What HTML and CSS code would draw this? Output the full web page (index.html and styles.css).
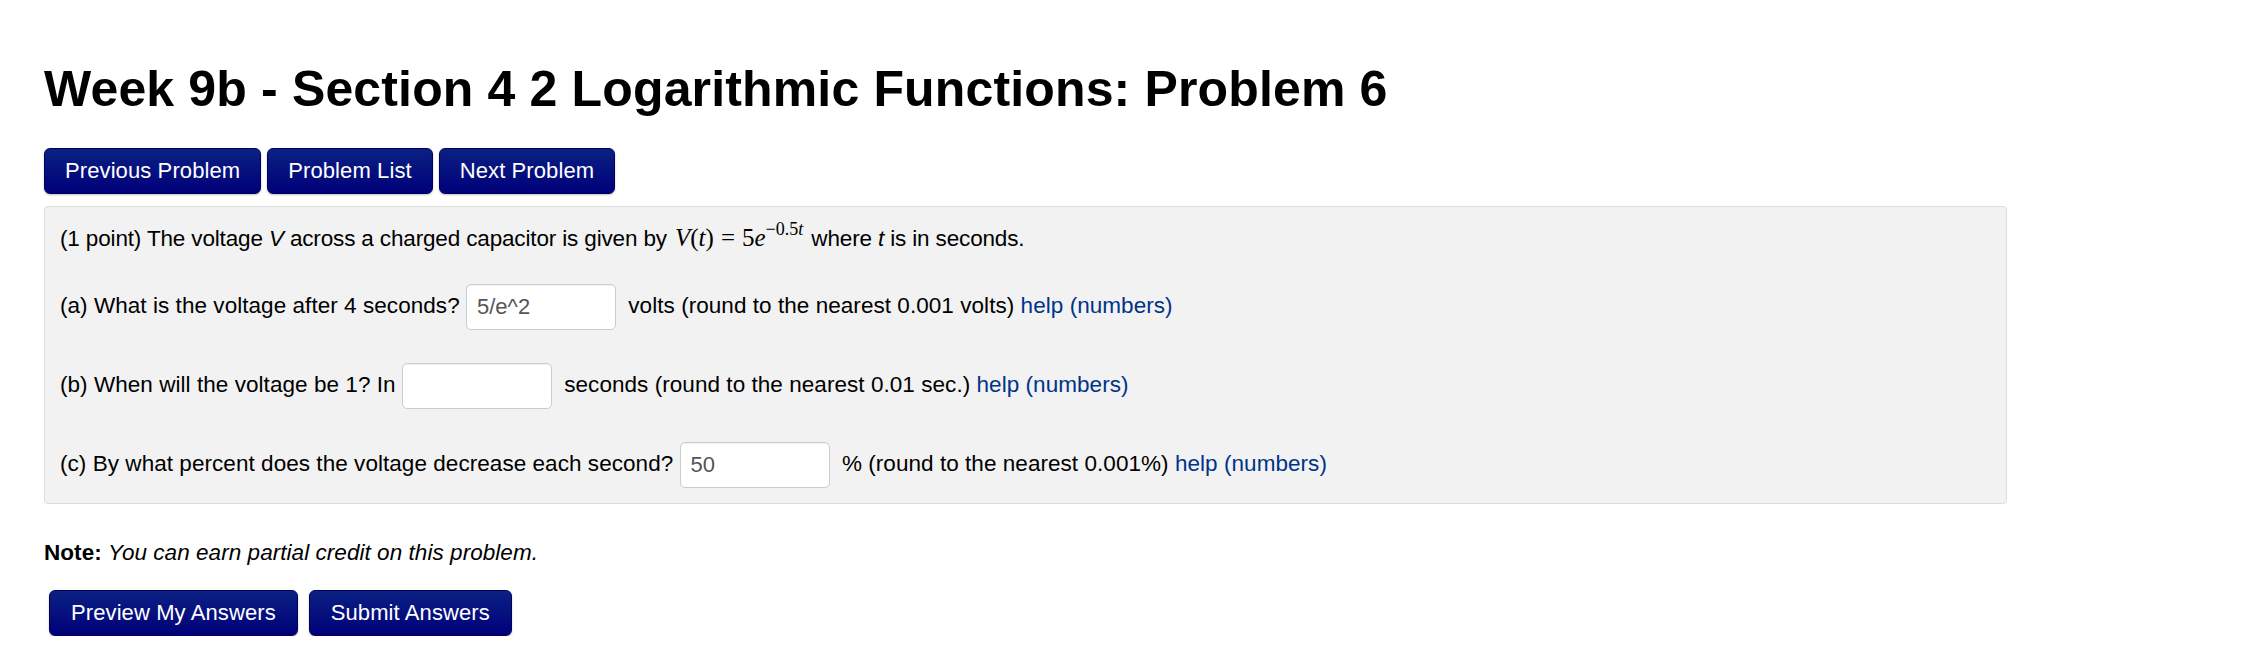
FILE: index.html
```html
<!DOCTYPE html>
<html>
<head>
<title>Week 9b - Section 4 2 Logarithmic Functions: Problem 6</title>
<link rel="stylesheet" href="styles.css">
</head>
<body>
	<div class="page">

		<h1 class="title">Week 9b - Section 4 2 Logarithmic Functions: Problem 6</h1>

		<div class="nav">
			<a class="btn" href="#">Previous Problem</a>
			<a class="btn" href="#">Problem List</a>
			<a class="btn" href="#">Next Problem</a>
		</div>

		<div class="problem">
			<p class="intro">(1 point) The voltage <i>V</i> across a charged capacitor is given by <span class="math"><i>V</i>(<i>t</i>)<span class="eq">=</span>5<i>e</i><sup>&minus;0.5<i>t</i></sup></span> where <i>t</i> is in seconds.</p>

			<p class="part">(a) What is the voltage after 4 seconds? <input class="answer" type="text" value="5/e^2"> volts (round to the nearest 0.001 volts) <a class="help" href="#">help (numbers)</a></p>

			<p class="part">(b) When will the voltage be 1? In <input class="answer" type="text" value=""> seconds (round to the nearest 0.01 sec.) <a class="help" href="#">help (numbers)</a></p>

			<p class="part">(c) By what percent does the voltage decrease each second? <input class="answer" type="text" value="50"> % (round to the nearest 0.001%) <a class="help" href="#">help (numbers)</a></p>
		</div>

		<p class="note"><b>Note:</b> <i>You can earn partial credit on this problem.</i></p>

		<div class="submit">
			<button class="btn" type="button">Preview My Answers</button>
			<button class="btn" type="button">Submit Answers</button>
		</div>

	</div>
</body>
</html>
```

FILE: styles.css
```css
html, body {
  margin: 0;
  padding: 0;
  background: #fff;
}

body {
  font-family: "Liberation Sans", Arial, sans-serif;
  font-size: 22.5px;
  letter-spacing: 0.05px;
  color: #000;
}

.page {
  padding: 62px 0 0 44px;
}

.title {
  margin: 0;
  font-size: 50px;
  line-height: 55px;
  font-weight: bold;
  letter-spacing: 0.15px;
}

.nav {
  display: flex;
  gap: 6px;
  margin-top: 31px;
}

.btn {
  display: inline-block;
  box-sizing: border-box;
  height: 46px;
  padding: 10px 20px;
  border: 1px solid #00005e;
  border-radius: 6px;
  background: linear-gradient(#0b2183, #000079);
  box-shadow: 0 1px 2px rgba(0, 0, 0, 0.25);
  color: #fff;
  font-family: inherit;
  font-size: 22px;
  line-height: 24px;
  letter-spacing: 0.1px;
  text-decoration: none;
}

.problem {
  width: 1963px;
  box-sizing: border-box;
  margin-top: 12px;
  padding: 16px 15px 15px;
  background: #f2f2f2;
  border: 1px solid #dcdcdc;
  border-radius: 4px;
}

.problem p {
  margin: 0;
  line-height: 30px;
}

.problem .intro {
  letter-spacing: -0.15px;
}

.problem .part {
  margin-top: 33px;
}

.problem .intro + .part {
  margin-top: 30px;
}

.math {
  font-family: "Liberation Serif", "Times New Roman", serif;
  font-size: 25px;
  letter-spacing: 0;
  margin: 0 2px;
}

.eq {
  margin: 0 7px;
}

.math sup {
  font-size: 18px;
  line-height: 0;
  vertical-align: 11px;
}

.answer {
  box-sizing: border-box;
  width: 150px;
  height: 46px;
  margin: 0 6px 0 0;
  padding: 0 10px;
  border: 1px solid #ccc;
  border-radius: 5px;
  background: #fff;
  box-shadow: inset 0 1px 1px rgba(0, 0, 0, 0.06);
  color: #555;
  font-family: inherit;
  font-size: 22px;
  vertical-align: middle;
}

.help {
  color: #038;
  text-decoration: none;
}

.note {
  margin: 34px 0 0;
  line-height: 30px;
}

.submit {
  display: flex;
  gap: 11px;
  margin: 22px 0 0 5px;
}

.submit .btn {
  padding: 10px 21px;
}
```
